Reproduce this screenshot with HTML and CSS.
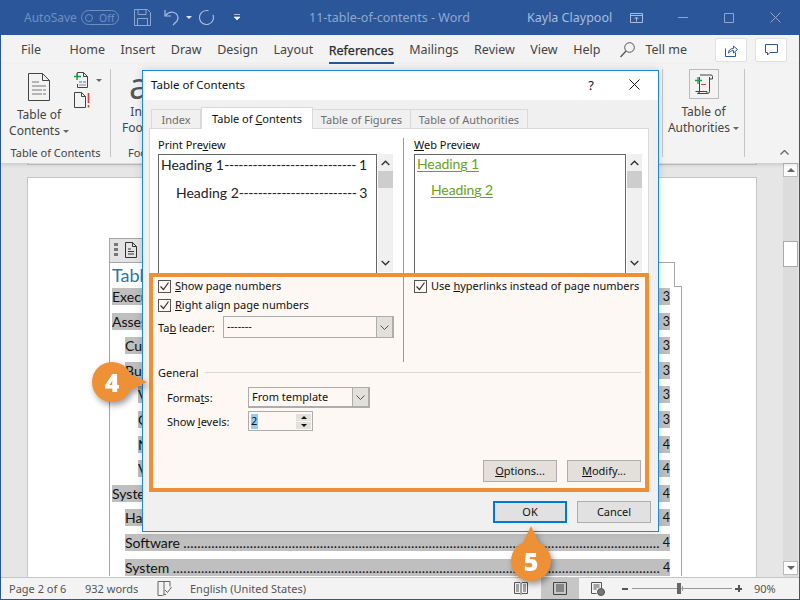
FILE: index.html
```html
<!DOCTYPE html>
<html lang="en">
<head>
<meta charset="utf-8">
<title>Table of Contents - Word</title>
<link rel="stylesheet" href="styles.css">
</head>
<body>
<div class="app">
  <header class="titlebar">
    <span class="autosave">AutoSave</span>
    <span class="toggle"><i class="knob"></i><span>Off</span></span>
    <svg class="t-save" width="17" height="17" viewBox="0 0 17 17" fill="none" stroke="#8ea7cf"><path d="M.5.5h13l3 3v13H.5z"/><path d="M4 .5v5h8v-5M3.5 16.5v-7h10v7"/></svg>
    <svg class="t-undo" width="17" height="17" viewBox="0 0 17 17" fill="none" stroke="#a9bcdc" stroke-width="1.2"><path d="M1 1v6h6"/><path d="M1.500 6.500C4 3.500 7 2.500 10 3.500c4 1.500 5 5.500 3 8.500l-4 4"/></svg>
    <svg class="t-caret" width="6" height="3" viewBox="0 0 6 3"><path d="M0 0h6L3 3z" fill="#dfe6f1"/></svg>
    <svg class="t-redo" width="17" height="17" viewBox="0 0 17 17" fill="none" stroke="#a9bcdc" stroke-width="1.2"><path d="M9.500 1.500h-2A7 7 0 1 0 14 6"/></svg>
    <svg class="t-more" width="6" height="7" viewBox="0 0 6 7"><path d="M0 .5h6M0 3h6L3 6z" fill="#fff" stroke="#fff" stroke-width=".6"/></svg>
    <span class="filename">11-table-of-contents - Word</span>
    <span class="user">Kayla Claypool</span>
    <svg class="t-ribbon" width="13" height="10" viewBox="0 0 13 10" fill="none" stroke="#a9bcdc"><path d="M.5.500h12v9H.5zM.5 2.500h12M6.500 8.500v-4M4.500 6l2-2 2 2"/></svg>
    <svg class="t-min" width="10" height="1" viewBox="0 0 10 1"><path d="M0 .5h10" stroke="#8ea7cf"/></svg>
    <svg class="t-max" width="10" height="10" viewBox="0 0 10 10" fill="none"><path d="M.5.500h9v9h-9z" stroke="#8ea7cf"/></svg>
    <svg class="t-close" width="11" height="11" viewBox="0 0 11 11" fill="none"><path d="M.5.500l10 10M10.500.500l-10 10" stroke="#8ea7cf"/></svg>
  </header>

  <nav class="tabs">
    <span class="tab tab-file">File</span>
    <span class="tab">Home</span>
    <span class="tab">Insert</span>
    <span class="tab">Draw</span>
    <span class="tab">Design</span>
    <span class="tab">Layout</span>
    <span class="tab tab-active">References</span>
    <span class="tab">Mailings</span>
    <span class="tab">Review</span>
    <span class="tab">View</span>
    <span class="tab">Help</span>
    <svg class="search" width="15" height="16" viewBox="0 0 15 16" fill="none" stroke="#555"><circle cx="9.500" cy="5.500" r="4.800"/><path d="M6 9l-5.500 6" stroke-width="1.300"/></svg>
    <span class="tab tell">Tell me</span>
    <span class="tool-btn tool-share"><svg width="13" height="13" viewBox="0 0 13 13" fill="none" stroke="#2b579a"><path d="M.5 4.500v8h10v-4"/><path d="M3.500 9c0-3 2-4.500 5-4.500V2l4 3.500-4 3.500V6.500c-2 0-3.500 1-5 2.500z"/></svg></span>
    <span class="tool-btn"><svg width="13" height="12" viewBox="0 0 13 12" fill="none" stroke="#2b579a"><path d="M.5.500h12v8H5L2.500 11V8.500h-2z"/></svg></span>
  </nav>

  <section class="ribbon">
    <div class="group group-toc">
      <div class="group-body">
        <div class="big-btn">
          <svg width="22" height="28" viewBox="0 0 22 28" fill="none" stroke="#444"><path d="M.5.500h14l7 7v20H.5z"/><path d="M14.500.500v7h7"/><path d="M4 9h7M4 13h14M4 17h10M15 17h3M4 21h10M15 21h3" stroke="#777"/></svg>
          <span class="big-label">Table of<br>Contents<i class="caret"></i></span>
        </div>
        <div class="small-col">
          <div class="small-row">
            <svg width="14" height="16" viewBox="0 0 14 16" fill="none"><path d="M3.500 6V.500h6l4 4v11h-10V12" stroke="#444"/><path d="M9.500.500v4h4" stroke="#444"/><path d="M3 1v7M0 4.500h7" stroke="#1d9c4a" stroke-width="1.400"/><path d="M5 10h3M9 10h3" stroke="#2b7cc4"/><path d="M5 13h7" stroke="#888"/></svg>
            <i class="caret caret-sm"></i>
          </div>
          <svg class="mark-icon" width="17" height="16" viewBox="0 0 17 16" fill="none"><path d="M.5.500h7l4 4v11H.5z" stroke="#444"/><path d="M7.500.500v4h4" stroke="#444"/><path d="M14.500 1v10M14.500 13v2.500" stroke="#e23b3b" stroke-width="1.600"/></svg>
        </div>
      </div>
      <div class="group-name">Table of Contents</div>
    </div>
    <div class="group group-foot">
      <div class="group-body foot-body">
        <div class="foot-a">a</div>
        <span class="big-label">Insert<br>Footnote</span>
      </div>
      <div class="group-name foot-name">Footnotes</div>
    </div>
    <div class="group group-auth">
      <div class="group-body auth-body">
        <span class="auth-icon"><svg width="18" height="20" viewBox="0 0 18 20" fill="none" stroke="#444"><path d="M4.500 3V17.500a2 2 0 0 1-2 2h10a2 2 0 0 0 2-2V3"/><path d="M5 1h11a1.500 1.500 0 0 1 1.500 1.500V5H14.500"/><path d="M.5 17.500h11.500v2"/><path d="M3 3v7M0 6.500h7" stroke="#1d9c4a" stroke-width="1.300"/><path d="M6 10.500h5" stroke="#e23b3b"/></svg></span>
        <span class="big-label">Table of<br>Authorities<i class="caret"></i></span>
      </div>
    </div>
    <div class="ribbon-end">
      <svg width="9" height="5" viewBox="0 0 9 5" fill="none"><path d="M.5 4.500l4-4 4 4" stroke="#666" stroke-width="1.300"/></svg>
    </div>
  </section>

  <main class="doc">
    <div class="doc-main">
      <div class="ruler"></div>
      <div class="page">
        <div class="cc">
          <div class="cc-handle">
            <i class="grip"></i>
            <svg width="12" height="16" viewBox="0 0 12 16" fill="none" stroke="#333"><path d="M.5.500h7l4 4v11H.5z"/><path d="M7.500.500v4h4M3 7h3M3 9.500h6M3 12h6"/></svg>
          </div>
          <div class="cc-frame">
            <div class="cc-head">
              <div class="cc-title">Table of Contents</div>
              <div class="cc-stub"></div>
            </div>
            <div class="toc">
              <div class="row l1"><span class="row-t">Executive Summary</span><span class="row-n">. 3</span></div>
              <div class="row l1"><span class="row-t">Assessment</span><span class="row-n">. 3</span></div>
              <div class="row l2"><span class="row-t">Current State</span><span class="row-n">. 3</span></div>
              <div class="row l2"><span class="row-t">Business Needs</span><span class="row-n">. 3</span></div>
              <div class="row l3"><span class="row-t">Vision</span><span class="row-n">. 3</span></div>
              <div class="row l3"><span class="row-t">Objectives</span><span class="row-n">. 3</span></div>
              <div class="row l3"><span class="row-t">Needs</span><span class="row-n">. 4</span></div>
              <div class="row l3"><span class="row-t">Value</span><span class="row-n">. 4</span></div>
              <div class="row l1"><span class="row-t">Systems</span><span class="row-n">. 4</span></div>
              <div class="row l2"><span class="row-t">Hardware</span><span class="row-n">. 4</span></div>
              <div class="row l2"><span class="row-t">Software</span><span class="dots">........................................................................................................................................</span><span class="row-n">4</span></div>
              <div class="row l2"><span class="row-t">System&nbsp;</span><span class="dots">...........................................................................................................................................</span><span class="row-n">4</span></div>
            </div>
          </div>
        </div>
      </div>
    </div>
    <div class="vscroll">
      <span class="vs-btn"><i class="tri-up"></i></span>
      <span class="vs-thumb"></span>
      <span class="vs-btn vs-down"><i class="tri-down"></i></span>
    </div>
  </main>

  <footer class="status">
    <span class="st-page">Page 2 of 6</span>
    <span class="st-words">932 words</span>
    <svg class="st-proof" width="15" height="15" viewBox="0 0 15 15" fill="none" stroke="#666"><path d="M1 .5h6v13l-1.500 1H1zM7 .5h6v5M7 13.500h2"/><path d="M8 9l2.500 2.500L14.500 6"/></svg>
    <span class="st-lang">English (United States)</span>
    <svg class="st-read" width="14" height="13" viewBox="0 0 14 13" fill="none" stroke="#555"><path d="M.5.500h5.500l1 1 1-1h5.500v11H8l-1 1-1-1H.5zM7 1.500v10M2 3h3M2 5h3M2 7h3M2 9h3M9 3h3M9 5h3M9 7h3M9 9h3"/></svg>
    <span class="st-layout"><svg width="14" height="13" viewBox="0 0 14 13" fill="none" stroke="#444"><path d="M.5.500h13v12H.5zM3 3h8M3 5h8M3 7h8M3 9h8"/></svg></span>
    <svg class="st-web" width="14" height="14" viewBox="0 0 14 14" fill="none" stroke="#555"><path d="M.5.500h10v6M.5.500v11h5M2.500 3h6M2.500 5h6M2.500 7h3"/><circle cx="10" cy="10" r="3.500" fill="#777"/></svg>
    <span class="zoom-minus"></span>
    <span class="slider"><i class="slider-mid"></i><i class="slider-thumb"></i></span>
    <span class="zoom-plus"></span>
    <span class="st-zoom">90%</span>
  </footer>

  <div class="dialog">
    <div class="dlg-title">
      <span class="dlg-name">Table of Contents</span>
      <span class="dlg-help">?</span>
      <svg width="11" height="11" viewBox="0 0 11 11" fill="none"><path d="M.5.500l10 10M10.500.500l-10 10" stroke="#111"/></svg>
    </div>
    <div class="dlg-tabs">
      <span class="dtab dtab-index">Index</span>
      <span class="dtab dtab-active">Table of <u>C</u>ontents</span>
      <span class="dtab dtab-fig">Table of Figures</span>
      <span class="dtab dtab-auth">Table of Authorities</span>
    </div>
    <div class="pane">
      <div class="previews">
        <div class="pv-col">
          <div class="pv-label">Print Pre<u>v</u>iew</div>
          <div class="pv-row">
            <div class="pv-box">
              <div class="pv-line"><span>Heading 1</span><span class="pv-dash">----------------------------</span><span>1</span></div>
              <div class="pv-line pv-line2"><span>Heading 2</span><span class="pv-dash">-------------------------</span><span>3</span></div>
            </div>
            <div class="pv-scroll"><svg width="9" height="6" viewBox="0 0 9 6" fill="none"><path d="M.7 5l3.800-3.800L8.300 5" stroke="#333" stroke-width="1.400"/></svg><i class="pv-thumb"></i><svg class="pv-dn" width="9" height="6" viewBox="0 0 9 6" fill="none"><path d="M.7 1l3.800 3.800L8.300 1" stroke="#333" stroke-width="1.400"/></svg></div>
          </div>
        </div>
        <div class="sep"></div>
        <div class="pv-col pv-web">
          <div class="pv-label"><u>W</u>eb Preview</div>
          <div class="pv-row">
            <div class="pv-box pv-box-web">
              <div class="web-1"><a>Heading 1</a></div>
              <div class="web-2"><a>Heading 2</a></div>
            </div>
            <div class="pv-scroll"><svg width="9" height="6" viewBox="0 0 9 6" fill="none"><path d="M.7 5l3.800-3.800L8.300 5" stroke="#333" stroke-width="1.400"/></svg><i class="pv-thumb"></i><svg class="pv-dn" width="9" height="6" viewBox="0 0 9 6" fill="none"><path d="M.7 1l3.800 3.800L8.300 1" stroke="#333" stroke-width="1.400"/></svg></div>
          </div>
        </div>
      </div>
      <div class="panel">
        <div class="opts">
          <div class="opts-left">
            <label class="check"><i class="box"><svg width="11" height="11" viewBox="0 0 11 11" fill="none"><path d="M1.500 5.500l3 3 5-7" stroke="#333" stroke-width="1.200"/></svg></i><span><u>S</u>how page numbers</span></label>
            <label class="check"><i class="box"><svg width="11" height="11" viewBox="0 0 11 11" fill="none"><path d="M1.500 5.500l3 3 5-7" stroke="#333" stroke-width="1.200"/></svg></i><span><u>R</u>ight align page numbers</span></label>
            <div class="leader">
              <span class="leader-label">Ta<u>b</u> leader:</span>
              <div class="select select-leader"><span class="sel-val">-------</span><span class="sel-btn"><svg width="9" height="5" viewBox="0 0 9 5" fill="none"><path d="M.5.500l4 4 4-4" stroke="#555"/></svg></span></div>
            </div>
          </div>
          <div class="sep sep-panel"></div>
          <div class="opts-right">
            <label class="check"><i class="box"><svg width="11" height="11" viewBox="0 0 11 11" fill="none"><path d="M1.500 5.500l3 3 5-7" stroke="#333" stroke-width="1.200"/></svg></i><span>Use <u>h</u>yperlinks instead of page numbers</span></label>
          </div>
        </div>
        <div class="general"><span>General</span><i class="gen-line"></i></div>
        <div class="field field-formats">
          <span class="field-label">Forma<u>t</u>s:</span>
          <div class="select select-formats"><span class="sel-val">From template</span><span class="sel-btn"><svg width="9" height="5" viewBox="0 0 9 5" fill="none"><path d="M.5.500l4 4 4-4" stroke="#555"/></svg></span></div>
        </div>
        <div class="field field-levels">
          <span class="field-label">Show <u>l</u>evels:</span>
          <div class="spin"><span class="spin-val">2</span><span class="spin-btns"><i class="sb"><b class="tri-up tri-k"></b></i><i class="sb"><b class="tri-down tri-k"></b></i></span></div>
        </div>
        <div class="panel-btns">
          <span class="btn btn-panel"><u>O</u>ptions...</span>
          <span class="btn btn-panel"><u>M</u>odify...</span>
        </div>
      </div>
    </div>
    <div class="dlg-btns">
      <span class="btn btn-ok">OK</span>
      <span class="btn">Cancel</span>
    </div>
  </div>

  <div class="callout callout-4">4</div>
  <div class="callout callout-5">5</div>
</div>
</body>
</html>
```

FILE: styles.css
```css
* { box-sizing: border-box; }
html, body { margin: 0; padding: 0; }
body { font-family: "Noto Sans", "Open Sans", sans-serif; font-size: 12px; color: #222; }
i { font-style: normal; display: block; }
svg { display: block; flex: none; }

.app {
  position: relative; width: 800px; height: 600px; overflow: hidden;
  display: flex; flex-direction: column;
  border: 1px solid #2b579a; border-top: 0; background: #e6e6e6;
}

/* title bar */
.titlebar {
  height: 35px; flex: none; margin: 0 -1px; background: #2b579a;
  display: flex; align-items: center; font-size: 12.500px;
}
.autosave { margin-left: 24px; width: 50px; color: #6f8fc3; white-space: nowrap; font-size: 12px; }
.toggle {
  margin-left: 7px; width: 38px; height: 15px; border: 1px solid #6f8fc3; border-radius: 8px;
  display: flex; align-items: center; color: #6f8fc3; font-size: 10.500px; padding-left: 3px;
}
.knob { width: 8px; height: 8px; border: 1px solid #6f8fc3; border-radius: 50%; margin-right: 6px; }
.t-save { margin-left: 15px; }
.t-undo { margin-left: 13px; }
.t-caret { margin-left: 5px; }
.t-redo { margin-left: 7px; }
.t-more { margin-left: 18px; }
.filename { margin-left: 69px; width: 218px; color: #8ea7cf; white-space: nowrap; }
.user { width: 103px; color: #a9bcdc; white-space: nowrap; }
.t-min { margin-left: 35px; }
.t-max { margin-left: 36px; }
.t-close { margin-left: 36px; }

/* tabs */
.tabs {
  height: 29px; flex: none; background: #f3f3f3; display: flex; align-items: center;
  gap: 15.500px; padding: 0 12px 0 20px; font-size: 12.500px; color: #444;
}
.tab { white-space: nowrap; line-height: 29px; height: 29px; }
.tab-file { margin-right: 13px; }
.tab-active { color: #2b2b2b; -webkit-text-stroke: .25px #2b2b2b; border-bottom: 2px solid #2b579a; height: 28px; }
.search { margin-left: 4px; margin-right: -5px; }
.tool-btn {
  width: 32px; height: 24px; background: #fff; border: 1px solid #e0e0e0; border-radius: 2px; margin-top: 1px;
  display: flex; align-items: center; justify-content: center;
}
.tool-share { margin-left: auto; margin-right: -7.500px; }

/* ribbon */
.ribbon {
  height: 99px; flex: none; background: #f3f3f3; display: flex; position: relative; z-index: 1;
  box-shadow: 0 2px 4px rgba(0,0,0,.12); color: #444;
}
.group { display: flex; flex-direction: column; margin-top: 5px; height: 88px; border-right: 1px solid #c6c6c6; }
.group-body { flex: none; height: 75px; display: flex; }
.group-name { flex: none; font-size: 11px; text-align: center; height: 17px; line-height: 17px; white-space: nowrap; }
.group-toc { width: 110px; }
.big-btn { width: 58px; margin-left: 9px; display: flex; flex-direction: column; align-items: center; padding-top: 4px; }
.big-label { font-size: 12px; line-height: 16px; text-align: center; display: block; margin-top: 6px; white-space: nowrap; }
.caret {
  display: inline-block; width: 0; height: 0; margin-left: 3px; vertical-align: 2px;
  border-left: 3px solid transparent; border-right: 3px solid transparent; border-top: 3px solid #666;
}
.small-col { margin-left: 6px; padding-top: 3px; }
.small-row { display: flex; align-items: center; gap: 5px; }
.mark-icon { margin-top: 4px; }
.group-foot { width: 552px; }
.foot-body { flex-direction: column; padding-left: 10px; }
.foot-a { font-size: 36px; line-height: 34px; color: #555; padding-left: 8px; height: 34px; }
.foot-body .big-label { margin-top: 0; margin-left: 1px; width: 50px; padding-top: 1px; }
.foot-name { text-align: left; padding-left: 17px; }
.group-auth { width: 82px; }
.auth-body { flex-direction: column; align-items: center; }
.auth-icon { width: 30px; height: 30px; border: 1px solid #bbb; display: flex; align-items: center; justify-content: center; }
.auth-body .big-label { margin-top: 5px; }
.ribbon-end { flex: 1; display: flex; align-items: flex-end; justify-content: flex-end; padding: 0 10px 8px 0; }

/* document */
.doc { flex: 1; display: flex; min-height: 0; background: #e6e6e6; }
.doc-main { flex: 1; overflow: hidden; }
.ruler { margin-left: 26px; width: 730px; height: 2px; border: 1px solid #c6c6c6; border-top: 0; background: #efefef; }
.page {
  margin: 12px 0 0 26px; width: 730px; height: 420px; background: #fff;
  border: 1px solid #c6c6c6; border-bottom: 0; padding: 60px 0 0 81px;
}
.cc { width: 573px; }
.cc-handle {
  width: 60px; height: 25px; background: #e3e3e3; border: 1px solid #a6a6a6; border-right: 0;
  display: flex; gap: 7px; padding: 3px 0 0 4px;
}
.grip { width: 4px; height: 14px; margin-top: 1px; background: repeating-linear-gradient(#777 0 3px, transparent 3px 5px); }
.cc-frame { border-left: 1px solid #a6a6a6; }
.cc-head { display: flex; height: 25px; margin-top: -1px; }
.cc-title {
  width: 565px; border-right: 1px solid #a6a6a6; border-top: 1px solid #a6a6a6;
  padding-left: 2px; font: 18px/24px "Lato", sans-serif; color: #2e74a5; white-space: nowrap;
}
.cc-stub { flex: 1; align-self: flex-end; border-bottom: 1px solid #a6a6a6; }
.toc { padding: 1px 0 0 2px; border-right: 1px solid #a6a6a6; }
.row {
  width: 558px; height: 17px; margin-bottom: 7.600px; background: #bfbfbf; display: flex; white-space: nowrap;
  font: 14px/17px "Lato", sans-serif; color: #111; overflow: hidden; justify-content: space-between;
}
.l2 { margin-left: 13px; width: 545px; }
.l3 { margin-left: 26px; width: 532px; }
.dots { margin-left: auto; letter-spacing: .2px; }
.row-n { padding-left: 3px; font-size: 12.500px; }

/* vertical scrollbar */
.vscroll { width: 15px; margin-right: 1px; background: #dcdcdc; display: flex; flex-direction: column; }
.vs-btn { width: 15px; height: 14px; flex: none; background: #fff; border: 1px solid #bbb; display: flex; align-items: center; justify-content: center; }
.vs-thumb { width: 15px; height: 26px; margin-top: 64px; background: #fff; border: 1px solid #aaa; }
.vs-down { margin-top: auto; margin-bottom: 2px; }
.tri-up { width: 0; height: 0; border-left: 4px solid transparent; border-right: 4px solid transparent; border-bottom: 4px solid #666; }
.tri-down { width: 0; height: 0; border-left: 4px solid transparent; border-right: 4px solid transparent; border-top: 4px solid #666; }

/* status bar */
.status {
  height: 22px; flex: none; background: #f3f3f3; border-top: 1px solid #c6c6c6; position: relative; z-index: 1;
  display: flex; align-items: center; font-size: 11px; color: #555; white-space: nowrap;
}
.st-page { margin-left: 8px; width: 76px; }
.st-words { width: 72px; }
.st-lang { margin-left: 18px; width: 324px; }
.st-layout { margin-left: 13px; width: 38px; height: 21px; background: #c6c6c6; display: flex; align-items: center; justify-content: center; }
.st-web { margin-left: 12px; }
.zoom-minus { margin-left: 17px; width: 6px; height: 2px; background: #555; }
.slider { margin-left: 4px; width: 100px; height: 1px; background: #999; position: relative; }
.slider-thumb { position: absolute; left: 45px; top: -5px; width: 4px; height: 11px; background: #666; }
.slider-mid { position: absolute; left: 50px; top: -2px; width: 1px; height: 5px; background: #999; }
.zoom-plus {
  margin-left: 3px; width: 7px; height: 7px;
  background: linear-gradient(#555,#555) center/7px 2px no-repeat, linear-gradient(#555,#555) center/2px 7px no-repeat;
}
.st-zoom { margin-left: 12px; }

/* dialog */
.dialog {
  position: absolute; left: 141px; top: 70px; width: 517px; height: 462px; z-index: 2;
  background: #f0f0f0; border: 1px solid #1e88d8; display: flex; flex-direction: column;
  font-size: 11px; color: #111; box-shadow: 0 0 8px rgba(0,0,0,.15);
}
.dlg-title {
  height: 29px; flex: none; background: #fff; display: flex; align-items: center; padding: 0 18px 2px 8px;
}
.dlg-name { flex: 1; font-size: 11.500px; }
.dlg-help { margin-right: 35px; font-size: 13px; }
.dlg-tabs { height: 28px; flex: none; padding: 6px 0 0 8px; display: flex; align-items: flex-end; }
.dtab {
  height: 19px; line-height: 19px; text-align: center; color: #6d6d6d; white-space: nowrap;
  background: #f0f0f0; border: 1px solid #d9d9d9; border-bottom: 0; border-left: 0;
}
.dtab-index { width: 50px; border-left: 1px solid #d9d9d9; }
.dtab-active {
  width: 112px; height: 22px; line-height: 22px; color: #111; background: #fff; margin-bottom: -1px;
  border-left: 1px solid #d9d9d9; position: relative; z-index: 1;
}
.dtab-fig { width: 98px; }
.dtab-auth { width: 117px; }
.pane {
  flex: 1; margin: 0 9px 0 6px; background: #fff; border: 1px solid #d9d9d9; border-bottom: 0;
  display: flex; flex-direction: column; min-height: 0;
}
.previews { height: 144px; flex: none; display: flex; padding: 9px 0 0 8px; overflow: hidden; }
.pv-col { width: 235px; flex: none; }
.pv-web { width: 228px; }
.pv-label { height: 16px; line-height: 14px; white-space: nowrap; }
.pv-row { display: flex; }
.pv-box {
  width: 219px; height: 122px; border: 1px solid #666; background: #fff; padding: 1px 9px 0 2px;
  font: 14px/18px "Lato", sans-serif; color: #222;
}
.pv-box-web { width: 212px; color: #6aa121; padding: 0 0 0 2px; letter-spacing: -.1px; }
.pv-line { display: flex; white-space: nowrap; justify-content: space-between; }
.pv-line2 { margin: 10px 0 0 15px; }
.pv-dash { margin-left: auto; margin-right: 3px; letter-spacing: -.5px; }
.web-1, .web-2 { text-decoration: underline; text-underline-offset: 2px; }
.web-2 { margin: 8px 0 0 14px; }
.pv-scroll {
  width: 15px; height: 118px; margin-left: 1px; background: #f0f0f0;
  display: flex; flex-direction: column; align-items: center; padding-top: 6px;
}
.pv-thumb { width: 15px; height: 17px; margin-top: 5px; background: #cdcdcd; }
.pv-dn { margin-top: 72px; }
.sep { width: 1px; background: #999; flex: none; margin: 0 10px 0 10px; }

/* orange panel */
.panel {
  flex: none; margin: 0 -1px; height: 219px; background: #fdf8f4; border: 4px solid #ee9035;
  display: flex; flex-direction: column; padding: 0 4px 0 5px;
}
.opts { height: 85px; flex: none; display: flex; }
.opts-left { width: 236px; flex: none; padding-top: 3px; }
.sep-panel { margin: 0 10px 0 9px; }
.opts-right { padding-top: 3px; }
.check { display: flex; height: 13px; margin-bottom: 6px; line-height: 12px; gap: 4px; white-space: nowrap; }
.box { width: 13px; height: 13px; border: 1px solid #555; background: #fff9f5; flex: none; }
.leader { display: flex; align-items: center; margin-top: -2px; }
.leader-label { width: 65px; flex: none; white-space: nowrap; }
.select { display: flex; background: #fdf8f4; border: 1px solid #adadad; border-right-width: 2px; }
.select-leader { width: 171px; height: 22px; }
.select-formats { width: 122px; height: 21px; border-bottom-width: 2px; }
.sel-val { flex: 1; line-height: 18px; padding-left: 3px; }
.sel-btn { width: 16px; background: #e3dfda; display: flex; align-items: center; justify-content: center; border-left: 1px solid #adadad; }
.general { margin-top: 1px; height: 18px; flex: none; display: flex; align-items: center; gap: 6px; }
.gen-line { flex: 1; height: 1px; background: #ddd8d3; }
.field { display: flex; align-items: center; padding-left: 9px; flex: none; }
.field-label { width: 81px; flex: none; white-space: nowrap; }
.field-formats { margin-top: 6px; }
.field-levels { margin-top: 3px; }
.spin { width: 65px; height: 20px; border: 1px solid #adadad; display: flex; padding: 2px 1px 1px 2px; align-items: stretch; }
.spin-val { flex: 1; background: linear-gradient(#99c9ef,#99c9ef) left/7px 100% no-repeat; line-height: 14px; }
.spin-btns { width: 15px; display: flex; flex-direction: column; gap: 1px; }
.sb { flex: 1; background: #e3dfda; display: flex; align-items: center; justify-content: center; }
.tri-k { border-bottom-color: #111; border-top-color: #111; border-left-width: 3px; border-right-width: 3px; }
.tri-up.tri-k { border-bottom-width: 3px; border-top: 0; }
.tri-down.tri-k { border-top-width: 3px; border-bottom: 0; }
.panel-btns { margin-top: auto; margin-bottom: 6px; display: flex; justify-content: flex-end; gap: 10px; }
.btn {
  width: 74px; height: 22px; line-height: 20px; text-align: center; background: #e1e1e1;
  border: 1px solid #adadad; display: block;
}
.btn-panel { background: #e3dfda; }
.dlg-btns { height: 40px; flex: none; display: flex; justify-content: flex-end; gap: 10px; padding: 10px 7px 0 0; }
.btn-ok { border: 2px solid #0078d7; line-height: 18px; }

/* numbered callouts */
.callout {
  position: absolute; width: 40px; height: 40px; border-radius: 50%; z-index: 3;
  background: #ee9035; color: #fff; font: 800 25px/40px "Open Sans", sans-serif; text-align: center;
  filter: drop-shadow(2px 3px 3px rgba(0,0,0,.4));
}
.callout::before { content: ""; position: absolute; background: #ee9035; }
.callout-4 { left: 91px; top: 362px; }
.callout-4::before { left: 30px; top: 8px; width: 25px; height: 24px; clip-path: polygon(0 0, 100% 50%, 0 100%); }
.callout-5 { left: 510px; top: 541px; }
.callout-5::before { left: 8px; top: -15px; width: 24px; height: 25px; clip-path: polygon(50% 0, 100% 100%, 0 100%); }
```
